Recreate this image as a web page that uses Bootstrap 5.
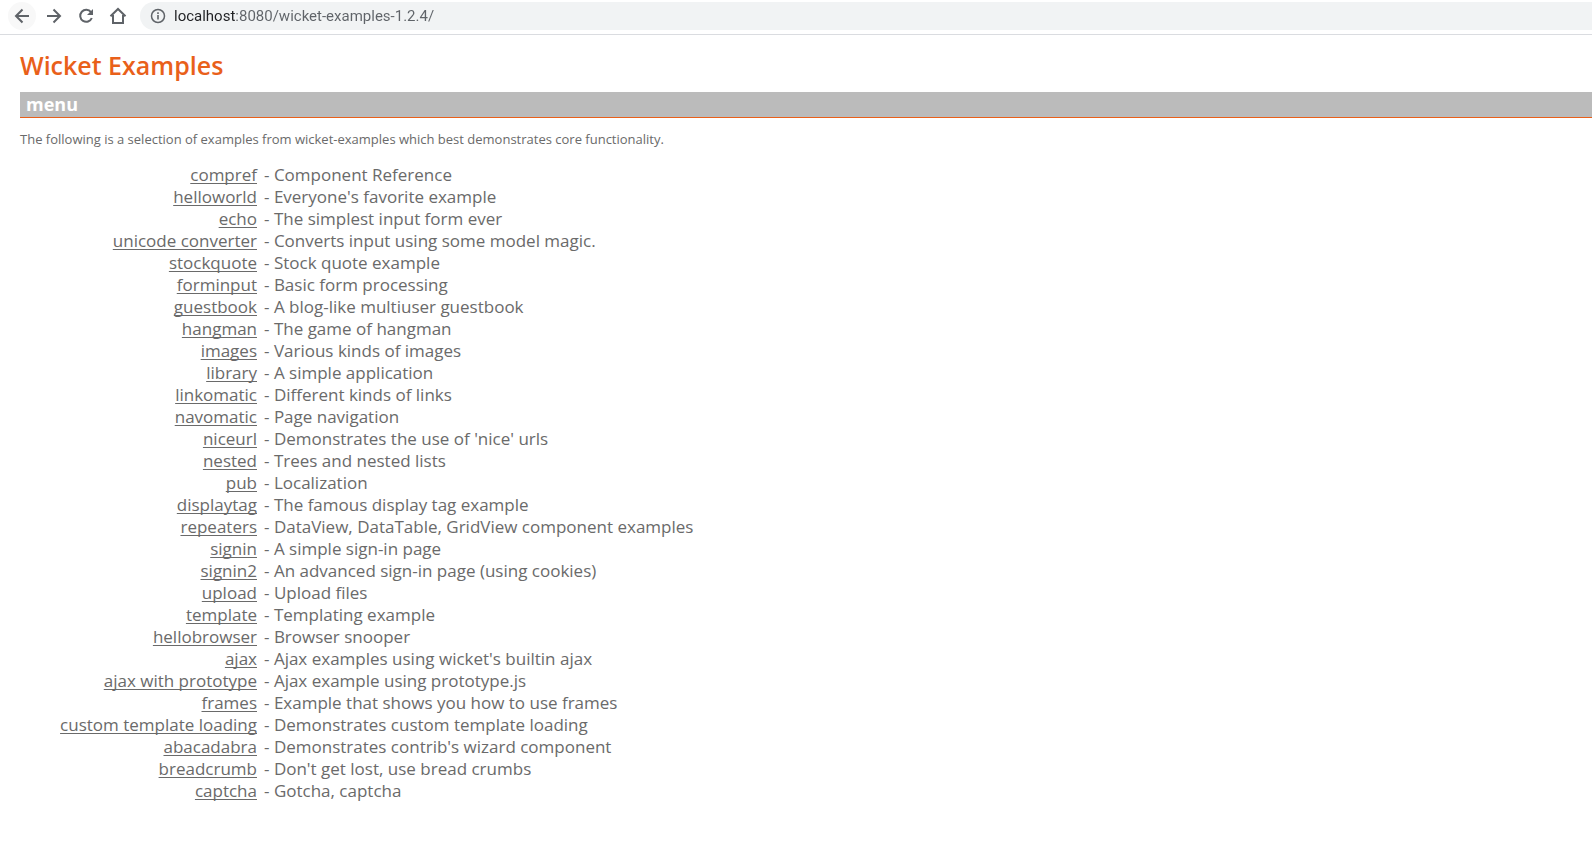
<!DOCTYPE html>
<html lang="en">
<head>
<meta charset="utf-8">
<meta name="viewport" content="width=device-width, initial-scale=1">
<title>Wicket Examples</title>
<link href="https://cdn.jsdelivr.net/npm/bootstrap@5.3.0/dist/css/bootstrap.min.css" rel="stylesheet">
<style>
body { font-family: "Open Sans", "Noto Sans", sans-serif; color: #6a6a6a; background: #fff; }
.toolbar { height: 35px; padding: 2px 0 4px 8px; gap: 4px; border-bottom: 1px solid #dadce0; }
.tool { width: 28px; height: 28px; color: #5f6368; background: none; }
.tool-active { background: #f8f8f8; }
.address { height: 28px; margin-left: 4px; padding-left: 10px; gap: 8px; background: #f1f3f4; border-radius: 14px 0 0 14px; color: #5f6368; }
.address input {
  font: 15px/20px Roboto, "Open Sans", sans-serif; min-width: 0;
  background: linear-gradient(90deg, #202124 61px, #5f6368 61px);
  -webkit-background-clip: text; background-clip: text; color: transparent;
}
.page { padding: 12px 0 0 20px; }
.title { font-size: 25px; line-height: 36px; font-weight: 600; color: #e9601a; margin: 0 0 9px; }
.section-bar { font-size: 18px; line-height: 25px; font-weight: 700; color: #fff; background: #bbb; border-bottom: 1px solid #e9601a; padding-left: 6px; margin: 0 0 11px; }
.intro { font-size: 13px; line-height: 20px; margin: 0 0 15px; }
.examples { font-size: 17px; line-height: 22px; }
.examples th { width: 237px; padding: 0; font-weight: 400; text-align: right; }
.examples td { padding: 0 0 0 7px; }
.examples a { color: inherit; text-decoration: underline; text-underline-offset: 2px; text-decoration-skip-ink: none; text-decoration-thickness: 1px; }
</style>
</head>
<body>
<nav class="toolbar d-flex align-items-center" aria-label="Browser">
  <button type="button" class="tool tool-active btn border-0 p-0 rounded-circle d-flex align-items-center justify-content-center" aria-label="Back"><svg width="16" height="16" viewBox="0 0 16 16" fill="none" stroke="currentColor" stroke-width="2"><path d="M15 8H2.5M8.5 1.5 2 8l6.500 6.500"/></svg></button>
  <button type="button" class="tool btn border-0 p-0 rounded-circle d-flex align-items-center justify-content-center" aria-label="Forward"><svg width="16" height="16" viewBox="0 0 16 16" fill="none" stroke="currentColor" stroke-width="2"><path d="M1 8h12.500M7.500 1.500 14 8l-6.500 6.500"/></svg></button>
  <button type="button" class="tool btn border-0 p-0 rounded-circle d-flex align-items-center justify-content-center" aria-label="Reload"><svg width="16" height="16" viewBox="0 0 16 16"><path d="M13 4.200A6 6 0 1 0 13.800 10" fill="none" stroke="currentColor" stroke-width="2"/><path d="M15 1v6H9z" fill="currentColor"/></svg></button>
  <button type="button" class="tool btn border-0 p-0 rounded-circle d-flex align-items-center justify-content-center" aria-label="Home"><svg width="18" height="18" viewBox="0 0 18 18" fill="none" stroke="currentColor" stroke-width="2"><path d="M1.500 9.300 9 2l7.500 7.300M4 8v8h10V8"/></svg></button>
  <div class="address d-flex align-items-center flex-grow-1">
    <svg width="16" height="16" viewBox="0 0 16 16" aria-hidden="true"><circle cx="8" cy="8" r="6.500" fill="none" stroke="currentColor" stroke-width="1.500"/><path d="M7.200 7h1.600v4.500H7.200zM7.200 4.300h1.600v1.600H7.200z" fill="currentColor"/></svg>
    <input type="text" class="border-0 p-0 flex-grow-1" aria-label="Address" value="localhost:8080/wicket-examples-1.2.4/">
  </div>
</nav>
<main class="page">
  <h1 class="title">Wicket Examples</h1>
  <h2 class="section-bar">menu</h2>
  <p class="intro">The following is a selection of examples from wicket-examples which best demonstrates core functionality.</p>
  <table class="examples">
    <tbody>
      <tr><th scope="row"><a href="#compref">compref</a></th><td>- Component Reference</td></tr>
      <tr><th scope="row"><a href="#helloworld">helloworld</a></th><td>- Everyone's favorite example</td></tr>
      <tr><th scope="row"><a href="#echo">echo</a></th><td>- The simplest input form ever</td></tr>
      <tr><th scope="row"><a href="#unicode">unicode converter</a></th><td>- Converts input using some model magic.</td></tr>
      <tr><th scope="row"><a href="#stockquote">stockquote</a></th><td>- Stock quote example</td></tr>
      <tr><th scope="row"><a href="#forminput">forminput</a></th><td>- Basic form processing</td></tr>
      <tr><th scope="row"><a href="#guestbook">guestbook</a></th><td>- A blog-like multiuser guestbook</td></tr>
      <tr><th scope="row"><a href="#hangman">hangman</a></th><td>- The game of hangman</td></tr>
      <tr><th scope="row"><a href="#images">images</a></th><td>- Various kinds of images</td></tr>
      <tr><th scope="row"><a href="#library">library</a></th><td>- A simple application</td></tr>
      <tr><th scope="row"><a href="#linkomatic">linkomatic</a></th><td>- Different kinds of links</td></tr>
      <tr><th scope="row"><a href="#navomatic">navomatic</a></th><td>- Page navigation</td></tr>
      <tr><th scope="row"><a href="#niceurl">niceurl</a></th><td>- Demonstrates the use of 'nice' urls</td></tr>
      <tr><th scope="row"><a href="#nested">nested</a></th><td>- Trees and nested lists</td></tr>
      <tr><th scope="row"><a href="#pub">pub</a></th><td>- Localization</td></tr>
      <tr><th scope="row"><a href="#displaytag">displaytag</a></th><td>- The famous display tag example</td></tr>
      <tr><th scope="row"><a href="#repeaters">repeaters</a></th><td>- DataView, DataTable, GridView component examples</td></tr>
      <tr><th scope="row"><a href="#signin">signin</a></th><td>- A simple sign-in page</td></tr>
      <tr><th scope="row"><a href="#signin2">signin2</a></th><td>- An advanced sign-in page (using cookies)</td></tr>
      <tr><th scope="row"><a href="#upload">upload</a></th><td>- Upload files</td></tr>
      <tr><th scope="row"><a href="#template">template</a></th><td>- Templating example</td></tr>
      <tr><th scope="row"><a href="#hellobrowser">hellobrowser</a></th><td>- Browser snooper</td></tr>
      <tr><th scope="row"><a href="#ajax">ajax</a></th><td>- Ajax examples using wicket's builtin ajax</td></tr>
      <tr><th scope="row"><a href="#prototype">ajax with prototype</a></th><td>- Ajax example using prototype.js</td></tr>
      <tr><th scope="row"><a href="#frames">frames</a></th><td>- Example that shows you how to use frames</td></tr>
      <tr><th scope="row"><a href="#custom">custom template loading</a></th><td>- Demonstrates custom template loading</td></tr>
      <tr><th scope="row"><a href="#abacadabra">abacadabra</a></th><td>- Demonstrates contrib's wizard component</td></tr>
      <tr><th scope="row"><a href="#breadcrumb">breadcrumb</a></th><td>- Don't get lost, use bread crumbs</td></tr>
      <tr><th scope="row"><a href="#captcha">captcha</a></th><td>- Gotcha, captcha</td></tr>
    </tbody>
  </table>
</main>
<script src="https://cdn.jsdelivr.net/npm/bootstrap@5.3.0/dist/js/bootstrap.bundle.min.js"></script>
</body>
</html>
